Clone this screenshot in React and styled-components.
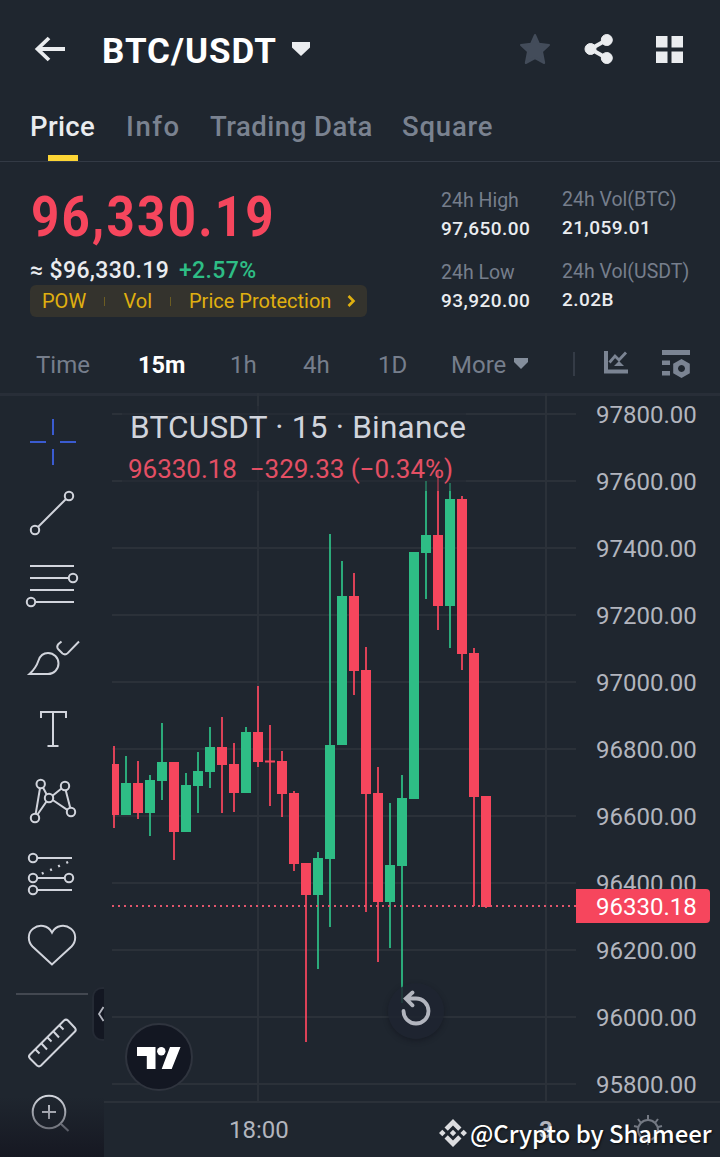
import React, { useState } from "react";
import styled, { createGlobalStyle } from "styled-components";

const UP = "#2ebd85";
const DOWN = "#f6465d";

// [high, low, body top, body bottom, direction], 12px per candle
const candles = [
    [746, 828, 764, 815, 0], [756, 815, 783, 815, 1], [761, 819, 783, 813, 0],
    [775, 836, 780, 813, 1], [723, 800, 762, 781, 1], [762, 860, 762, 832, 0],
    [773, 832, 785, 832, 1], [752, 813, 771, 786, 1], [727, 788, 747, 772, 1],
    [717, 813, 747, 765, 0], [743, 812, 764, 793, 0], [727, 793, 732, 793, 1],
    [686, 767, 732, 762, 0], [725, 806, 760.5, 762.5, 0], [751, 817, 761, 794, 0],
    [791, 871, 793, 864, 0], [863, 1042, 863, 895, 0], [852, 969, 858, 895, 1],
    [534, 927, 745, 859, 1], [561, 745, 596, 745, 1], [573, 695, 596, 671, 0],
    [647, 912, 670, 794, 0], [767, 962, 793, 902, 0], [803, 948, 865, 902, 1],
    [775, 1003, 798, 866, 1], [552, 799, 552, 799, 1], [481, 599, 535, 553, 1],
    [470, 630, 535, 606, 0], [483, 648, 499, 606, 1], [496, 670, 499, 654, 0],
    [648, 906, 653, 797, 0], [796, 908, 796, 907, 0],
];

const prices = ["97800.00", "97600.00", "97400.00", "97200.00", "97000.00", "96800.00", "96600.00", "96400.00", "96200.00", "96000.00", "95800.00"];

const tabs = [
    { name: "Price", width: 96, spacing: 0.35 },
    { name: "Info", width: 84, spacing: 1.6 },
    { name: "Trading Data", width: 192, spacing: 0.5 },
    { name: "Square", width: 120, spacing: 0.8 },
];

const frames = [
    { name: "Time", width: 102 },
    { name: "15m", width: 92 },
    { name: "1h", width: 73 },
    { name: "4h", width: 75 },
    { name: "1D", width: 73 },
];

const tools = [
    <g stroke="#3a5bd0" key="cross">
        <path d="M53 13v16M53 43v16M30 36h16M60 36h16" />
    </g>,
    <g key="trend">
        <circle cx="69" cy="18" r="4.2" />
        <circle cx="35" cy="52" r="4.2" />
        <path d="M38 49L66 21" />
    </g>,
    <g key="fib">
        <path d="M30 16h44M30 28h38M30 40h44M36 52h38" />
        <circle cx="73" cy="28" r="4.2" />
        <circle cx="31" cy="52" r="4.2" />
    </g>,
    <g key="brush">
        <path d="M29.5 52H48a10.5 10.5 0 0 0 0-21c-5 0-8 3-9.5 7.5C36.5 44.5 34 48 29.5 52z" />
        <path d="M61.5 19.5L58.5 22q-2.5 3 0 5.5l4 4q2.7 2 5.2-.4L79 19.5" />
    </g>,
    <g key="text">
        <path d="M41 24v-6h25v6M53 18v34M47.5 52h11" />
    </g>,
    <g key="pattern">
        <circle cx="40.7" cy="18" r="4.2" />
        <circle cx="65" cy="20" r="4.2" />
        <circle cx="49" cy="32" r="4.2" />
        <circle cx="71" cy="46" r="4.2" />
        <circle cx="35" cy="52" r="4.2" />
        <path d="M40 22.2L35.7 47.8M43 21.5l3.7 7M46.5 35.5l-9 13M52.5 29.7l9-7.2M52.7 34l14.6 9.8M65.7 24.2l4.5 17.6" />
    </g>,
    <g key="forecast">
        <circle cx="33" cy="20" r="4.2" />
        <circle cx="33" cy="40" r="4.2" />
        <circle cx="69" cy="40" r="4.2" />
        <circle cx="33" cy="52" r="4.2" />
        <path d="M37.5 20H72M37.5 40h27M37.5 52H72" />
        <path d="M41.8 35.7l1.8-.8M50.1 32.2l1.8-.8M58.1 28.4l1.8-.8M66.3 24.8l1.8-.8" strokeWidth="2.4" />
    </g>,
    <g key="heart">
        <path d="M52 54.500L32.500 36.500C27.500 31 27.500 23 33 18.700C39 14 48 15 52 22.500C56 15 65 14 71 18.700C76.500 23 76.500 31 71.500 36.500z" />
    </g>,
];

function App() {
    const [activeTab, setActiveTab] = useState("Price");
    const [frame, setFrame] = useState("15m");

    return (
        <Page>
            <GlobalStyle />
            <Header>
                <svg width="32" height="28" viewBox="0 0 32 28" fill="none" stroke="#eaecef" strokeWidth="3.8">
                    <path d="M31 14H4M15 3L3.5 14L15 25" />
                </svg>
                <Pair>BTC/USDT</Pair>
                <svg width="18" height="14" viewBox="0 0 18 14" fill="#eaecef">
                    <path d="M0 0h18v5.5L9 14L0 5.5z" />
                </svg>
                <HeaderIcons>
                    <svg width="32" height="32" viewBox="0 0 32 32" fill="#434c5a" stroke="#434c5a" strokeWidth="2" strokeLinejoin="round">
                        <path d="M16 2l4 8.8 10 1.2-7 6.5 2.200 11.500-9.200-5-9.200 5L9 18.500 2 12l10-1.200z" />
                    </svg>
                    <svg width="30" height="32" viewBox="0 0 30 32" fill="#eaecef" stroke="#eaecef">
                        <path d="M22.5 7L6.5 16L22.5 25" fill="none" strokeWidth="4" />
                        <circle cx="22.8" cy="7" r="5.5" />
                        <circle cx="6.5" cy="16" r="5.5" />
                        <circle cx="22.8" cy="25" r="5.5" />
                    </svg>
                    <svg width="27" height="27" viewBox="0 0 27 27" fill="#eaecef">
                        <path d="M0 0h11.5v11.5H0zM15.5 0H27v11.5H15.5zM0 15.5h11.5V27H0zM15.5 15.5H27V27H15.5z" />
                    </svg>
                </HeaderIcons>
            </Header>

            <Tabs>
                {tabs.map((tab) => (
                    <Tab key={tab.name} $width={tab.width} $spacing={tab.spacing} $active={activeTab === tab.name} onClick={() => setActiveTab(tab.name)}>
                        <span>{tab.name}</span>
                    </Tab>
                ))}
            </Tabs>

            <Ticker>
                <div>
                    <LastPrice>96,330.19</LastPrice>
                    <Fiat>
                        <span>≈ $96,330.19</span>
                        <Change>+2.57%</Change>
                    </Fiat>
                    <Tags>
                        <Tag $width={62}>POW</Tag>
                        <TagLine />
                        <Tag $width={46}>Vol</Tag>
                        <TagLine />
                        <Tag $width={158}>Price Protection</Tag>
                        <svg width="9" height="12" viewBox="0 0 9 12" fill="none" stroke="#e0b010" strokeWidth="2.6">
                            <path d="M1.5 1l5 5-5 5" />
                        </svg>
                    </Tags>
                </div>
                <Stats>
                    <Stat>
                        <dt>24h High</dt>
                        <dd>97,650.00</dd>
                        <dt>24h Low</dt>
                        <dd>93,920.00</dd>
                    </Stat>
                    <Stat $raised>
                        <dt>24h Vol(BTC)</dt>
                        <dd>21,059.01</dd>
                        <dt>24h Vol(USDT)</dt>
                        <dd>2.02B</dd>
                    </Stat>
                </Stats>
            </Ticker>

            <Frames>
                {frames.map((item) => (
                    <Frame key={item.name} $width={item.width} $active={frame === item.name} onClick={() => setFrame(item.name)}>
                        {item.name}
                    </Frame>
                ))}
                <Frame $width={63}>More</Frame>
                <svg width="14" height="11" viewBox="0 0 14 11" fill="#848e9c">
                    <path d="M0 0h14v4L7 11L0 4z" />
                </svg>
                <FrameLine />
                <FrameIcons>
                    <svg width="24" height="24" viewBox="0 0 24 24" fill="none" stroke="#7b8493">
                        <path d="M2 1v20.5h22" strokeWidth="4" />
                        <path d="M5.5 12.5L11 6l4 4 7-7.5" strokeWidth="2.8" />
                        <path d="M10 16l5-5 5 5z" fill="#7b8493" stroke="none" />
                    </svg>
                    <svg width="28" height="28" viewBox="0 0 28 28" fill="#7b8493">
                        <path d="M0 0h28v5H0zM0 10.5h8V15H0zM0 21h8v4.5H0z" />
                        <path fillRule="evenodd" d="M19.5 9l8.3 4.8v9.4L19.5 28l-8.3-4.8v-9.4zM19.5 15a3.5 3.5 0 1 0 .01 0z" />
                    </svg>
                </FrameIcons>
            </Frames>

            <Main>
                <Toolbar>
                    {tools.map((tool, i) => (
                        <Tool key={i} viewBox="0 0 104 72">{tool}</Tool>
                    ))}
                    <ToolLine />
                    <Tool viewBox="0 0 104 72">
                        <path d="M64 13.5q2-1.8 4 0l7 7.5q1.5 2 0 3.5L41 58.5q-2 1.7-4 0l-7-7q-2-2 0-4z" />
                        <path d="M35.5 42.5l4 4M41.5 36.5l5.5 6M47.5 30.5l4 4M53.5 24.5l5.5 6M59.5 18.5l4 4" />
                    </Tool>
                    <Tool viewBox="0 0 104 72">
                        <circle cx="49" cy="33" r="16.3" />
                        <path d="M42 33h14M49 26v14" />
                        <path d="M60.5 44.5l8 7.5" stroke="#b0b4be" />
                    </Tool>
                    <Fade />
                    <Handle>
                        <svg width="7" height="16" viewBox="0 0 7 16" fill="none" stroke="#b2b5be" strokeWidth="1.8">
                            <path d="M6.5 1L2 8l4.5 7" />
                        </svg>
                    </Handle>
                </Toolbar>

                <Chart>
                    <Pane>
                        <svg width="472" height="709" viewBox="104 393 472 709">
                            <clipPath id="pane"><rect x="112" y="393" width="464" height="709" /></clipPath>
                            <g clipPath="url(#pane)">
                                {prices.map((price, i) => (
                                    <rect key={price} x="112" y={413 + i * 67} width="464" height="2" fill="#2b3139" />
                                ))}
                                <rect x="257" y="393" width="2" height="709" fill="#2b3139" />
                                <rect x="545" y="393" width="2" height="709" fill="#2b3139" />
                                {candles.map(([high, low, top, bottom, up], i) => (
                                    <g key={i} fill={up ? UP : DOWN}>
                                        <rect x={113 + i * 12} y={high} width="2" height={low - high} opacity="0.88" />
                                        <rect x={109 + i * 12} y={top} width="10" height={bottom - top} />
                                    </g>
                                ))}
                                <path d="M112 906H576" stroke="#e2566c" strokeWidth="2" strokeDasharray="2 4" />
                            </g>
                        </svg>
                        <Legend>
                            <Symbol>BTCUSDT · 15 · Binance</Symbol>
                            <Delta>96330.18&nbsp; −329.33 (−0.34%)</Delta>
                        </Legend>
                        <Logo>
                            <svg width="44" height="22" viewBox="0 0 44 22" fill="#fff">
                                <path d="M0 0h18.5v22H9.8V9H0zM33 0h10.5l-8.8 22h-10z" />
                                <circle cx="24.3" cy="4.2" r="4.2" />
                            </svg>
                        </Logo>
                        <Reset>
                            <svg width="32" height="36" viewBox="0 0 32 36" fill="none" stroke="#b2b5be" strokeWidth="3.8" strokeLinecap="round">
                                <path d="M3.5 21A12.5 12.5 0 1 0 16 8.5H7M12.5 2.5L5.8 8.5l6.7 6.8" />
                            </svg>
                        </Reset>
                    </Pane>
                    <PriceAxis>
                        {prices.map((price) => (
                            <span key={price}>{price}</span>
                        ))}
                        <PriceTag>96330.18</PriceTag>
                    </PriceAxis>
                    <TimeAxis>
                        <Hour>18:00</Hour>
                        <Day>3</Day>
                        <svg width="30" height="32" viewBox="0 0 30 32" fill="none" stroke="#747983" strokeWidth="2">
                            <circle cx="15" cy="16" r="10" />
                            <path d="M15 1v5M15 26v5M5 5l3 4M25 5l-3 4M1 12l4 1M29 12l-4 1" />
                        </svg>
                    </TimeAxis>
                </Chart>
            </Main>

            <Watermark>
                <svg width="28" height="28" viewBox="0 0 28 28" fill="#dcdde0">
                    <path d="M14 0l8.5 8.5-3.3 3.3L14 6.6l-5.2 5.2-3.3-3.3zM14 28l-8.5-8.5 3.3-3.3 5.2 5.2 5.2-5.2 3.3 3.3zM14 10.8l3.2 3.2-3.2 3.2-3.2-3.2zM3.3 10.7L6.6 14l-3.3 3.3L0 14zM24.7 10.7L28 14l-3.3 3.3-3.3-3.3z" />
                </svg>
                <span>@Crypto by Shameer</span>
            </Watermark>
        </Page>
    );
}

const GlobalStyle = createGlobalStyle`
    * {
        box-sizing: border-box;
    }
    body {
        margin: 0;
        background: #1f262f;
    }
    svg {
        display: block;
        flex-shrink: 0;
    }
`;

const Page = styled.div`
    position: relative;
    display: flex;
    flex-direction: column;
    width: 720px;
    height: 1157px;
    overflow: hidden;
    background: #1f262f;
    color: #eaecef;
    font-family: Roboto, "Liberation Sans", sans-serif;
    white-space: nowrap;
`;

const Header = styled.header`
    display: flex;
    align-items: center;
    height: 98px;
    padding: 0 37px 0 34px;
`;

const Pair = styled.h1`
    width: 190px;
    margin: 4px 0 0 36px;
    font-size: 35px;
    font-weight: 700;
    letter-spacing: 1px;
    color: #fff;
`;

const HeaderIcons = styled.div`
    display: flex;
    align-items: center;
    margin-left: auto;

    svg:nth-child(2) {
        margin: 0 42px 0 33px;
    }
`;

const Tabs = styled.nav`
    display: flex;
    height: 64px;
    padding-left: 30px;
    border-bottom: 1px solid #333a45;
`;

const Tab = styled.button`
    position: relative;
    width: ${props => props.$width}px;
    padding: 2px 0 7px;
    border: 0;
    background: none;
    text-align: left;
    font: 500 27.5px/54px Roboto, sans-serif;
    letter-spacing: ${props => props.$spacing}px;
    color: ${props => props.$active ? "#eaecef" : "#7a8290"};

    span::after {
        content: "";
        display: ${props => props.$active ? "block" : "none"};
        position: absolute;
        left: 18px;
        bottom: 0;
        width: 30px;
        height: 6px;
        background: #fcd535;
    }
`;

const Ticker = styled.section`
    display: flex;
    height: 172px;
    padding: 24px 0 0 30px;
`;

const LastPrice = styled.div`
    width: 411px;
    height: 69px;
    margin-left: 1px;
    margin-right: -1px;
    font-size: 56px;
    line-height: 63px;
    font-weight: 700;
    letter-spacing: 2.6px;
    color: #f6465d;
    transform: scaleX(0.88);
    transform-origin: left;
`;

const Fiat = styled.div`
    display: flex;
    height: 30px;
    font-size: 23px;
    line-height: 31px;
    font-weight: 500;
    letter-spacing: 0.35px;

    span {
        width: 149px;
    }
`;

const Change = styled.b`
    font-weight: 500;
    color: #2ebd85;
`;

const Tags = styled.div`
    display: flex;
    align-items: center;
    width: 337px;
    height: 32px;
    padding-left: 12px;
    border-radius: 6px;
    background: #34332d;
`;

const Tag = styled.span`
    width: ${props => props.$width}px;
    font-size: 20px;
    color: #e0b010;
`;

const TagLine = styled.i`
    width: 1px;
    height: 9px;
    margin-right: 18.5px;
    background: #6d5d22;
`;

const Stats = styled.div`
    display: flex;
    padding-top: 1px;
`;

const Stat = styled.dl`
    width: 121px;
    margin: ${props => props.$raised ? "-1px" : "0"} 0 0;

    dt {
        height: 28px;
        font-size: 19.5px;
        line-height: 28px;
        color: #767e8c;
    }
    dd {
        height: 44px;
        margin: 0;
        font-size: 19px;
        line-height: 28px;
        font-weight: 500;
        letter-spacing: 0.45px;
    }
`;

const Frames = styled.div`
    display: flex;
    align-items: center;
    height: 62px;
    padding-left: 36px;
    border-bottom: 3px solid #282e38;
`;

const Frame = styled.button`
    width: ${props => props.$width}px;
    padding: 2px 0 0;
    border: 0;
    background: none;
    text-align: left;
    font-family: inherit;
    font-size: ${props => props.$active ? 23.5 : 24}px;
    font-weight: ${props => props.$active ? 700 : 400};
    color: ${props => props.$active ? "#fff" : "#767e8c"};
`;

const FrameLine = styled.i`
    width: 2px;
    height: 24px;
    margin-left: 45px;
    background: #343b46;
`;

const FrameIcons = styled.div`
    display: flex;
    gap: 34px;
    margin-left: 29px;
`;

const Main = styled.main`
    display: flex;
    flex: 1;
`;

const Toolbar = styled.aside`
    position: relative;
    width: 104px;
    padding-top: 10px;
`;

const Tool = styled.svg`
    width: 104px;
    height: 72px;
    fill: none;
    stroke: #d1d4dc;
    stroke-width: 2;
`;

const ToolLine = styled.hr`
    width: 72px;
    height: 2px;
    margin: 11px 16px 12px;
    border: 0;
    background: #434851;
`;

const Fade = styled.div`
    position: absolute;
    left: 0;
    bottom: 0;
    width: 104px;
    height: 60px;
    background: linear-gradient(transparent, #161822);
`;

const Handle = styled.div`
    position: absolute;
    right: 0;
    top: 591px;
    display: flex;
    align-items: center;
    justify-content: flex-end;
    width: 12px;
    height: 54px;
    border: 2px solid #252b35;
    border-right: 0;
    border-radius: 10px 0 0 10px;
    background: #131722;
`;

const Chart = styled.section`
    display: grid;
    grid-template-columns: 472px 144px;
    grid-template-rows: 705px 56px;
`;

const Pane = styled.div`
    position: relative;

    > svg {
        margin-top: -3px;
    }
`;

const Legend = styled.div`
    position: absolute;
    left: 18px;
    top: 10px;
    height: 85px;
    background: rgba(31, 38, 47, 0.5);
`;

const Symbol = styled.div`
    padding-left: 8px;
    height: 43px;
    font-size: 31.5px;
    line-height: 43px;
    letter-spacing: 0.23px;
    color: #d1d4dc;
`;

const Delta = styled.div`
    padding-left: 6px;
    font-size: 26px;
    line-height: 40px;
    letter-spacing: -0.03px;
    color: #e34f64;
`;

const Logo = styled.div`
    position: absolute;
    left: 21px;
    top: 627px;
    display: flex;
    align-items: center;
    justify-content: center;
    width: 68px;
    height: 68px;
    padding-top: 2px;
    border: 2px solid #2f343e;
    border-radius: 50%;
    background: #131722;
`;

const Reset = styled.div`
    position: absolute;
    left: 284px;
    top: 587px;
    padding: 7px 12px;
    width: 56px;
    height: 56px;
    border-radius: 50%;
    background: rgba(31, 37, 48, 0.85);
    box-shadow: 0 2px 5px rgba(15, 18, 28, 0.5);
`;

const PriceAxis = styled.div`
    position: relative;
    display: flex;
    flex-direction: column;
    overflow: hidden;
    padding-left: 20px;
    font-size: 24px;
    color: #b2b5be;

    > span {
        height: 67px;
        flex-shrink: 0;
        line-height: 67px;
    }
    > span:first-child {
        margin-top: -14px;
    }
`;

const PriceTag = styled.div`
    position: absolute;
    left: 0;
    top: 493px;
    width: 134px;
    height: 34px;
    padding-left: 20px;
    border-radius: 0 4px 4px 0;
    background: #f6465d;
    color: #fff;
    line-height: 36px;
`;

const TimeAxis = styled.div`
    grid-column: 1 / 3;
    display: flex;
    align-items: center;
    border-top: 2px solid #2b3139;
    font-size: 24px;
    color: #b2b5be;
`;

const Hour = styled.span`
    width: 310px;
    padding-left: 125px;
`;

const Day = styled.b`
    width: 219px;
    padding-left: 125px;
`;

const Watermark = styled.div`
    position: absolute;
    left: 439px;
    top: 1113px;
    display: flex;
    align-items: center;
    gap: 3px;
    height: 40px;
    font: 500 24px/40px "Noto Sans CJK SC", sans-serif;
    letter-spacing: -0.05px;
    color: #fff;
    text-shadow: 1px 1px 2px rgba(0, 0, 0, 0.7);
`;

export default App;
